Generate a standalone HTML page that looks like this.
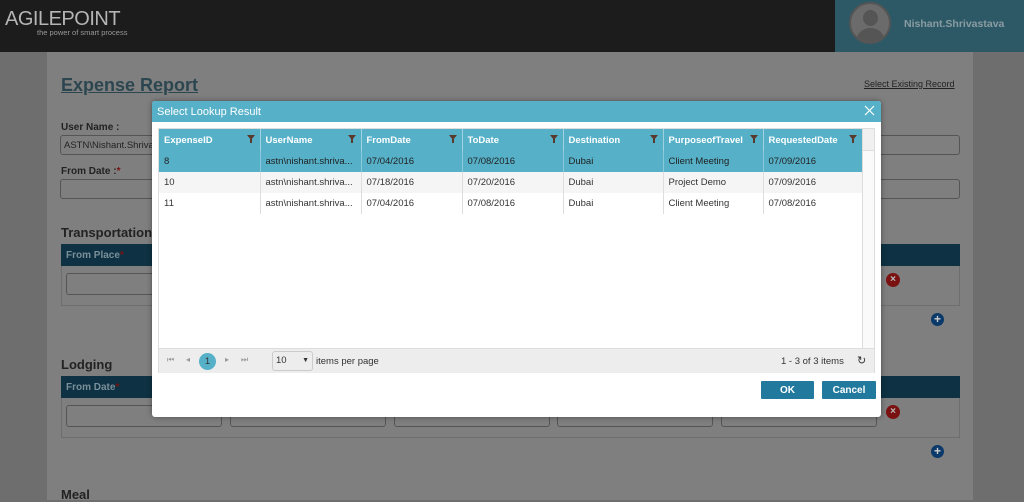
<!DOCTYPE html>
<html><head><style>
*{box-sizing:border-box;margin:0;padding:0}
body{width:1024px;height:500px;overflow:hidden;position:relative;background:#6e6e6e;font-family:"Liberation Sans",sans-serif;}
.a{position:absolute}
.hdr{left:0;top:0;width:1024px;height:52px;background:#1c1c1c}
.usr{left:835px;top:0;width:189px;height:52px;background:#2d5967}
.panel{left:47px;top:52px;width:926px;height:448px;background:#7f7f7f}
.inp{position:absolute;border:1px solid #555;border-radius:3px;background:#7f7f7f}
.lbl{position:absolute;font-size:10px;font-weight:bold;color:#222}
.sec{position:absolute;font-size:13px;font-weight:bold;color:#222}
.bar{position:absolute;left:61px;width:899px;height:22px;background:#0e3243;color:#7a8f99;font-size:10px;font-weight:bold;padding:6px 5px}
.rowbox{position:absolute;left:61px;width:899px;height:40px;border:1px solid #6e6e6e;border-top:none}
.rx{position:absolute;width:14px;height:14px;border-radius:50%;background:#7a1212;color:#bbb;font-size:10px;font-weight:bold;text-align:center;line-height:14px}
.pl{position:absolute;width:13px;height:13px;border-radius:50%;background:#0b3a6a;color:#ccc;font-size:12px;font-weight:bold;text-align:center;line-height:13px}
.dlg{left:152px;top:101px;width:729px;height:316px;background:#fff;border-radius:3px;box-shadow:0 0 6px rgba(0,0,0,.4)}
.ttl{left:0;top:0;width:729px;height:21px;background:#55b0c8;color:#fff;font-size:11px;padding:5px 5px;border-radius:3px 3px 0 0}
.grid{left:6px;top:27px;width:717px;height:245px;border:1px solid #ddd}
table{border-collapse:collapse;position:absolute;left:0;top:0;width:703px;font-size:9.5px;table-layout:fixed}
th{background:#55b0c8;color:#fff;text-align:left;height:22px;padding:0 5px;border-right:1px solid #9fd3e1;font-weight:bold;position:relative}
th i{position:absolute;right:5px;top:6px;width:0;height:0;border-left:4px solid transparent;border-right:4px solid transparent;border-top:5px solid #5b3a2e}
th i:after{content:"";position:absolute;left:-1px;top:-2px;width:2px;height:5px;background:#5b3a2e}
td{height:21px;padding:0 5px;color:#333;border-right:1px solid #ddd;white-space:nowrap;overflow:hidden}
tr.s td{background:#55b0c8;color:#222;border-right-color:#8cc9da}
tr.g td{background:#f5f5f5}
.pager{left:0;top:219px;width:715px;height:25px;background:#ededed;border-top:1px solid #ddd;font-size:9.5px;color:#333}
.btn{position:absolute;top:280px;height:18px;background:#217a9e;color:#fff;font-size:10px;font-weight:bold;text-align:center;padding-top:4px;border-radius:1px}
</style></head><body>
<div class="a hdr"></div>
<div class="a" style="left:5px;top:8px;font-size:20px;color:#b5b5b5;letter-spacing:-0.5px">AGILEPOINT</div>
<div class="a" style="left:37px;top:28px;font-size:7.5px;color:#999">the power of smart process</div>
<div class="a usr"></div>
<div class="a" style="left:849px;top:2px;width:42px;height:42px;border-radius:50%;background:#6b6b6b;border:2px solid #555;overflow:hidden"><div class="a" style="left:12px;top:6px;width:15px;height:16px;border-radius:50%;background:#555"></div><div class="a" style="left:5px;top:24px;width:29px;height:20px;border-radius:14px 14px 0 0;background:#555"></div></div>
<div class="a" style="left:904px;top:18px;font-size:10.5px;font-weight:bold;color:#8a9ca3">Nishant.Shrivastava</div>
<div class="a panel"></div>
<div class="a" style="left:61px;top:75px;font-size:18px;font-weight:bold;color:#2c4650;text-decoration:underline">Expense Report</div>
<div class="a" style="left:864px;top:79px;font-size:9px;color:#222;text-decoration:underline">Select Existing Record</div>
<div class="lbl" style="left:61px;top:122px">User Name :</div>
<div class="inp" style="left:60px;top:135px;width:110px;height:20px;font-size:9.5px;color:#222;padding:4px 3px">ASTN\Nishant.Shrivas</div>
<div class="lbl" style="left:61px;top:166px">From Date :<span style="color:#7a1212">*</span></div>
<div class="inp" style="left:60px;top:179px;width:110px;height:20px"></div>
<div class="inp" style="left:870px;top:135px;width:90px;height:20px"></div>
<div class="inp" style="left:870px;top:179px;width:90px;height:20px"></div>
<div class="sec" style="left:61px;top:225px">Transportation</div>
<div class="bar" style="top:244px">From Place<span style="color:#7a1212">*</span></div>
<div class="rowbox" style="top:266px"></div>
<div class="inp" style="left:66px;top:273px;width:100px;height:22px"></div>
<div class="rx" style="left:886px;top:273px">×</div>
<div class="pl" style="left:931px;top:313px">+</div>
<div class="sec" style="left:61px;top:357px">Lodging</div>
<div class="bar" style="top:376px">From Date<span style="color:#7a1212">*</span></div>
<div class="rowbox" style="top:398px"></div>
<div class="inp" style="left:66px;top:405px;width:156px;height:22px"></div>
<div class="inp" style="left:230px;top:405px;width:156px;height:22px"></div>
<div class="inp" style="left:394px;top:405px;width:156px;height:22px"></div>
<div class="inp" style="left:557px;top:405px;width:156px;height:22px"></div>
<div class="inp" style="left:721px;top:405px;width:156px;height:22px"></div>
<div class="rx" style="left:886px;top:405px">×</div>
<div class="pl" style="left:931px;top:445px">+</div>
<div class="sec" style="left:61px;top:487px">Meal</div>

<div class="a dlg">
 <div class="a ttl">Select Lookup Result</div>
 <svg class="a" style="left:712px;top:4px" width="11" height="11" viewBox="0 0 11 11"><path d="M1 1L10 10M10 1L1 10" stroke="#fff" stroke-width="1.2"/></svg>
 <div class="a grid">
  <table>
   <colgroup><col style="width:101px"><col style="width:101px"><col style="width:101px"><col style="width:101px"><col style="width:100px"><col style="width:100px"><col style="width:99px"></colgroup>
   <tr><th>ExpenseID<i></i></th><th>UserName<i></i></th><th>FromDate<i></i></th><th>ToDate<i></i></th><th>Destination<i></i></th><th>PurposeofTravel<i></i></th><th>RequestedDate<i></i></th></tr>
   <tr class="s"><td>8</td><td>astn\nishant.shriva...</td><td>07/04/2016</td><td>07/08/2016</td><td>Dubai</td><td>Client Meeting</td><td>07/09/2016</td></tr>
   <tr class="g"><td>10</td><td>astn\nishant.shriva...</td><td>07/18/2016</td><td>07/20/2016</td><td>Dubai</td><td>Project Demo</td><td>07/09/2016</td></tr>
   <tr><td>11</td><td>astn\nishant.shriva...</td><td>07/04/2016</td><td>07/08/2016</td><td>Dubai</td><td>Client Meeting</td><td>07/08/2016</td></tr>
  </table>
  <div class="a" style="left:703px;top:0;width:12px;height:219px;border-left:1px solid #ddd;background:#fafafa"></div>
  <div class="a" style="left:703px;top:0;width:12px;height:22px;background:#f0f0f0;border-left:1px solid #ddd;border-bottom:1px solid #ddd"></div>
  <div class="a pager">
   <span class="a" style="left:8px;top:6px;color:#999;font-size:8px">⏮</span>
   <span class="a" style="left:27px;top:6px;color:#999;font-size:8px">◂</span>
   <div class="a" style="left:40px;top:4px;width:17px;height:17px;border-radius:50%;background:#55b0c8;color:#333;text-align:center;line-height:17px">1</div>
   <span class="a" style="left:66px;top:6px;color:#999;font-size:8px">▸</span>
   <span class="a" style="left:82px;top:6px;color:#999;font-size:8px">⏭</span>
   <div class="a" style="left:113px;top:2px;width:41px;height:20px;border:1px solid #ccc;border-radius:3px;padding:3px 3px">10<span style="float:right;font-size:7px;margin-top:2px">▼</span></div>
   <span class="a" style="left:157px;top:7px">items per page</span>
   <span class="a" style="left:622px;top:7px">1 - 3 of 3 items</span>
   <span class="a" style="left:698px;top:5px;font-size:11px">↻</span>
  </div>
 </div>
 <div class="btn" style="left:609px;width:53px">OK</div>
 <div class="btn" style="left:670px;width:54px">Cancel</div>
</div>
</body></html>
